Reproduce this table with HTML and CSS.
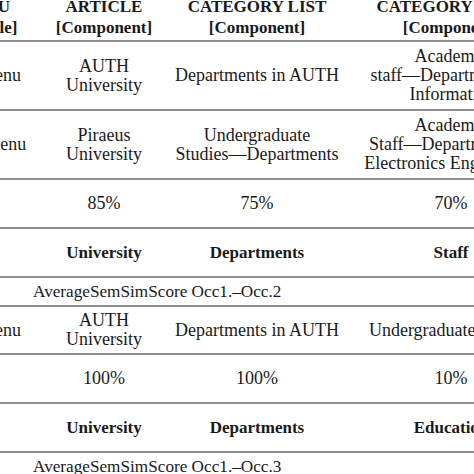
FILE: index.html
```html
<!DOCTYPE html>
<html lang="en">
<head>
<meta charset="utf-8">
<title>Semantic similarity table</title>
<link rel="stylesheet" href="styles.css">
</head>
<body>
<table class="sim">
  <colgroup>
    <col class="c0"><col class="c1"><col class="c2"><col class="c3">
  </colgroup>
  <thead>
    <tr class="head">
      <th>MENU<br>[Module]</th>
      <th>ARTICLE<br>[Component]</th>
      <th>CATEGORY LIST<br>[Component]</th>
      <th>CATEGORY BLOG<br>[Component]</th>
    </tr>
  </thead>
  <tbody>
    <tr class="multi">
      <td>Top Menu</td>
      <td>AUTH<br>University</td>
      <td>Departments in AUTH</td>
      <td>Academic<br>staff—Departments of<br>Informatics</td>
    </tr>
    <tr class="multi">
      <td>Main Menu</td>
      <td>Piraeus<br>University</td>
      <td>Undergraduate<br>Studies—Departments</td>
      <td>Academic<br>Staff—Departments of<br>Electronics Engineering</td>
    </tr>
    <tr>
      <td></td>
      <td>85%</td>
      <td>75%</td>
      <td>70%</td>
    </tr>
    <tr class="bold">
      <td></td>
      <td>University</td>
      <td>Departments</td>
      <td>Staff</td>
    </tr>
    <tr class="avg">
      <td colspan="4">AverageSemSimScore Occ1.–Occ.2</td>
    </tr>
    <tr class="two">
      <td>Top Menu</td>
      <td>AUTH<br>University</td>
      <td>Departments in AUTH</td>
      <td>Undergraduate Studies</td>
    </tr>
    <tr>
      <td></td>
      <td>100%</td>
      <td>100%</td>
      <td>10%</td>
    </tr>
    <tr class="bold">
      <td></td>
      <td>University</td>
      <td>Departments</td>
      <td>Education</td>
    </tr>
    <tr class="avg">
      <td colspan="4">AverageSemSimScore Occ1.–Occ.3</td>
    </tr>
  </tbody>
</table>
</body>
</html>
```

FILE: styles.css
```css
html, body {
  margin: 0;
  padding: 0;
  overflow: hidden;
  width: 474px;
  height: 474px;
  background: #ffffff;
}

.sim {
  margin: -4px 0 0 -76px;
  border-collapse: separate;
  border-spacing: 0;
  table-layout: fixed;
  width: 628px;
  font-family: "Liberation Serif", "Times New Roman", serif;
  font-size: 18px;
  line-height: 19px;
  color: #1a1a1a;
}

.c0 { width: 120px; }
.c1 { width: 120px; }
.c2 { width: 186px; }
.c3 { width: 202px; }

.sim th,
.sim td {
  text-align: center;
  vertical-align: middle;
  white-space: nowrap;
  padding: 14px 0;
  border-bottom: 2px solid #8e8e8e;
}

.head th {
  font-weight: bold;
  font-size: 17px;
  line-height: 21px;
  padding: 0 0 2px;
}

.multi td {
  padding: 5px 0;
}

.two td {
  padding: 4px 0;
}

.bold td {
  font-weight: bold;
  font-size: 17px;
}

.avg td {
  text-align: left;
  font-size: 17.2px;
  padding: 4px 0 4px 109px;
}
```
